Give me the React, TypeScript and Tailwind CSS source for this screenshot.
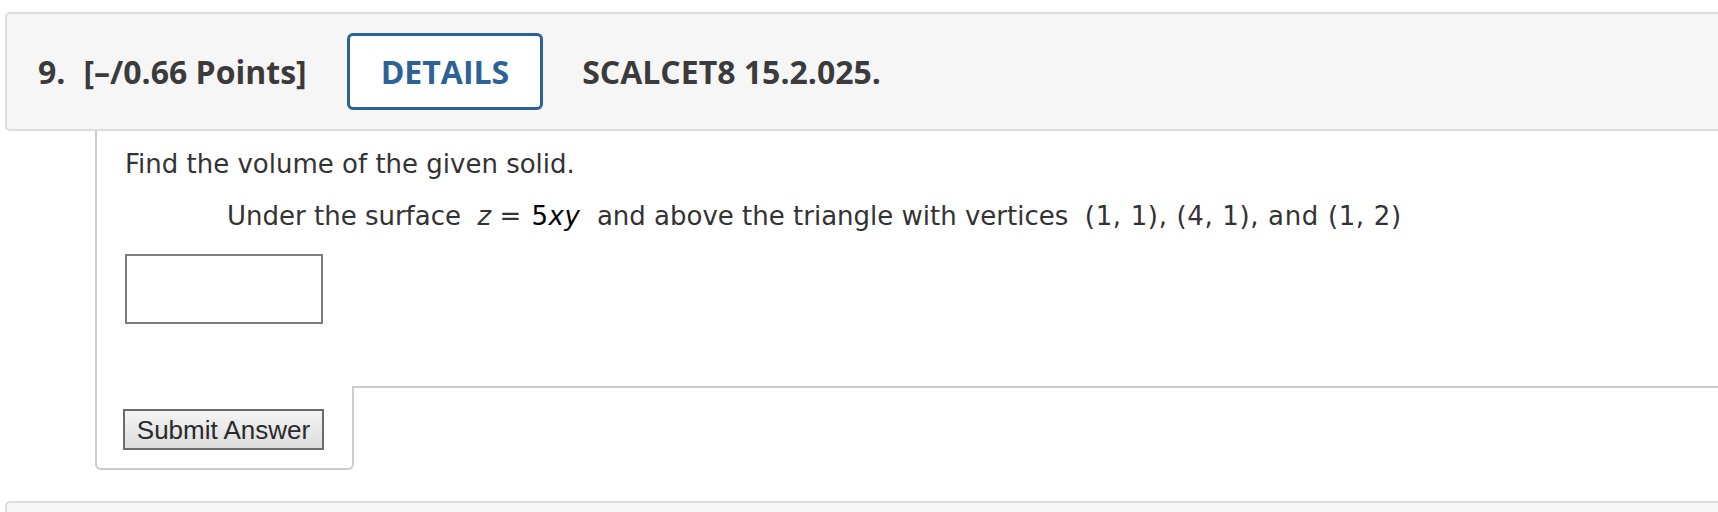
import React from 'react'

const headFont = { fontFamily: '"Open Sans", "Liberation Sans", sans-serif' }
const bodyFont = { fontFamily: '"DejaVu Sans", Verdana, sans-serif' }

function QuestionHeader() {
  return (
    <div className="flex h-[119px] items-center rounded-l-[5px] border-2 border-r-0 border-[#dddddd] bg-[#f6f6f6] pl-[31px] text-[32px] font-bold text-[#3b3b3b]" style={headFont}>
      <span>9.</span>
      <span className="ml-[18px]">[–/0.66 Points]</span>
      <button className="ml-[40px] flex h-[77px] items-center rounded-[6px] border-[3px] border-[#2c6297] bg-white px-[31px] text-[32px] font-bold text-[#2c6297]">
        DETAILS
      </button>
      <span className="ml-[39px]">SCALCET8 15.2.025.</span>
    </div>
  )
}

export default function App() {
  return (
    <div className="h-[512px] w-[1718px] overflow-hidden bg-white pl-[5px] pt-3">
      <QuestionHeader />

      <div className="ml-[90px]">
        <div className="border-l-2 border-[#cccccc] pb-[62px] pl-[28px] pt-[17px] text-[26px] leading-[32px] text-[#333333]" style={bodyFont}>
          <p>Find the volume of the given solid.</p>
          <p className="mt-5 pl-[102px] whitespace-pre">
            {'Under the surface  '}
            <i>z</i>
            {' = '}
            <span className="ml-[2px] tracking-[0.02em] text-black">5<i>xy</i></span>
            {'  and above the triangle with vertices  '}
            <span className="tracking-[0.025em]">(1, 1), (4, 1), and (1, 2)</span>
          </p>
          <input
            type="text"
            aria-label="Answer"
            className="mt-[22px] block h-[70px] w-[198px] border-2 border-[#7d7d7d] bg-white outline-none"
          />
        </div>

        <div className="flex">
          <div className="w-[259px] rounded-b-[6px] border-2 border-t-0 border-[#cccccc] pb-[18px] pl-[26px] pt-[23px]">
            <button
              className="h-[41px] w-[201px] border-2 border-[#6b6b6b] bg-gradient-to-b from-[#f5f5f5] to-[#dcdcdc] text-[26px] leading-none text-[#2a2a2a]"
              style={{ fontFamily: '"Liberation Sans", Arial, sans-serif' }}
            >
              Submit Answer
            </button>
          </div>
          <div className="flex-1 border-t-2 border-[#cccccc]" />
        </div>
      </div>

      <div className="mt-[31px] h-10 rounded-tl-[5px] border-l-2 border-t-2 border-[#dddddd] bg-[#f6f6f6]" />
    </div>
  )
}
